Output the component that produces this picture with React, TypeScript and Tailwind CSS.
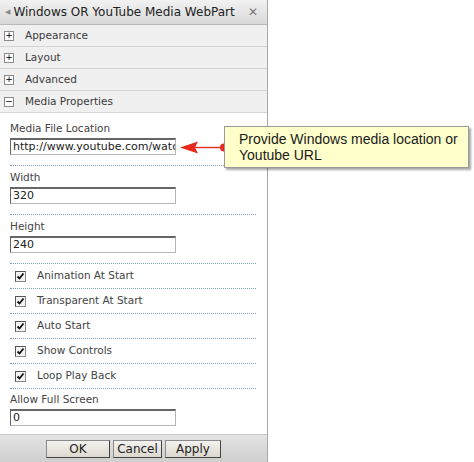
import React from "react";

const font = { fontFamily: '"DejaVu Sans", Verdana, sans-serif' };

function Section({ label, open }: { label: string; open?: boolean }) {
  return (
    <div className="flex h-[22px] shrink-0 items-center border-b border-[#d4d4d4] bg-[#f0f0f0] pl-[4px] text-[10.5px] text-[#3b3b3b]">
      <span className="flex h-[10px] w-[10px] items-center justify-center border border-[#8a8a8a] bg-white text-[9px] leading-none text-black">
        {open ? "−" : "+"}
      </span>
      <span className="ml-[11px]">{label}</span>
    </div>
  );
}

function Field({ label, value }: { label: string; value: string }) {
  return (
    <div className="border-b border-dotted border-[#7d9ec0] pb-[10px] pt-[5px]">
      <div className="text-[10.5px] leading-[13px] text-[#444]">{label}</div>
      <div className="mt-[3px] h-[17px] w-[166px] overflow-hidden whitespace-nowrap border border-[#b5b5b5] border-l-[#666] border-t-2 border-t-[#666] bg-white pl-[2px] text-[11px] leading-[14px] text-[#222]">
        {value}
      </div>
    </div>
  );
}

function Check({ label }: { label: string }) {
  return (
    <div className="flex h-[25px] items-center border-b border-dotted border-[#7d9ec0] pl-[5px] text-[10.5px] text-[#444]">
      <span className="flex h-[11px] w-[11px] items-center justify-center border border-[#888] border-l-[#555] border-t-[#555] bg-[#f4f4f4]">
        <svg width="9" height="9" viewBox="0 0 9 9">
          <path d="M1.5 4.5 L3.5 6.5 L7.5 1.5" stroke="#111" strokeWidth="1.8" fill="none" />
        </svg>
      </span>
      <span className="ml-[11px]">{label}</span>
    </div>
  );
}

function Btn({ children, w }: { children: React.ReactNode; w: string }) {
  return (
    <button
      className={`h-[18px] ${w} border border-[#8a8a8a] border-b-[#444] border-r-[#444] bg-gradient-to-b from-[#f4f2ee] to-[#ddd9d0] text-[12px] leading-none text-[#222]`}
    >
      {children}
    </button>
  );
}

export default function App() {
  return (
    <div className="relative h-[462px] w-[474px] overflow-hidden bg-white" style={font}>
      <div className="flex h-[462px] w-[268px] flex-col border-r border-[#a8a8a8]">
        <div className="flex h-[25px] shrink-0 items-center whitespace-nowrap border-b border-[#b8b8b8] bg-gradient-to-b from-[#f2f2f2] to-[#d9d9d9] pl-[5px] pr-[9px]">
          <span className="text-[7px] text-[#888]">◀</span>
          <span className="ml-[3px] text-[12px] text-[#222]">Windows OR YouTube Media WebPart</span>
          <span className="ml-auto text-[12px] font-bold text-[#777]">✕</span>
        </div>
        <Section label="Appearance" />
        <Section label="Layout" />
        <Section label="Advanced" />
        <Section label="Media Properties" open />
        <div className="ml-[10px] mr-[11px] mt-[4px] flex-1">
          <Field label="Media File Location" value="http://www.youtube.com/watch?v=" />
          <Field label="Width" value="320" />
          <Field label="Height" value="240" />
          <Check label="Animation At Start" />
          <Check label="Transparent At Start" />
          <Check label="Auto Start" />
          <Check label="Show Controls" />
          <Check label="Loop Play Back" />
          <div className="pt-[4px]">
            <div className="text-[10.5px] leading-[13px] text-[#444]">Allow Full Screen</div>
            <div className="mt-[3px] h-[17px] w-[166px] border border-[#b5b5b5] border-l-[#666] border-t-2 border-t-[#666] bg-white pl-[2px] text-[11px] leading-[14px] text-[#222]">
              0
            </div>
          </div>
        </div>
        <div className="flex h-[28px] shrink-0 items-center gap-[3px] border-t border-[#c8c8c8] bg-gradient-to-b from-[#e4e4e4] to-[#cfcfcf] pl-[46px]">
          <Btn w="w-[64px]">OK</Btn>
          <Btn w="w-[49px]">Cancel</Btn>
          <Btn w="w-[56px]">Apply</Btn>
        </div>
      </div>

      <svg className="absolute left-[178px] top-[138px]" width="52" height="20" viewBox="0 0 52 20">
        <line x1="16" y1="9.5" x2="46" y2="9.5" stroke="#e0301e" strokeWidth="1.4" />
        <polygon points="2,9.5 20,3.5 17,9.5 20,15.5" fill="#e8281a" />
        <circle cx="46" cy="9.5" r="4" fill="#e8281a" />
      </svg>

      <div
        className="absolute left-[224px] top-[126px] h-[42px] w-[245px] border border-[#9a9a9a] bg-[#ffffcc] pl-[14px] pt-[4px] text-[14px] leading-[16px] text-[#1a1a1a] shadow-[2px_2px_2px_rgba(0,0,0,0.35)]"
        style={{ fontFamily: '"Liberation Sans", Arial, sans-serif' }}
      >
        Provide Windows media location or
        <br />
        Youtube URL
      </div>
    </div>
  );
}
